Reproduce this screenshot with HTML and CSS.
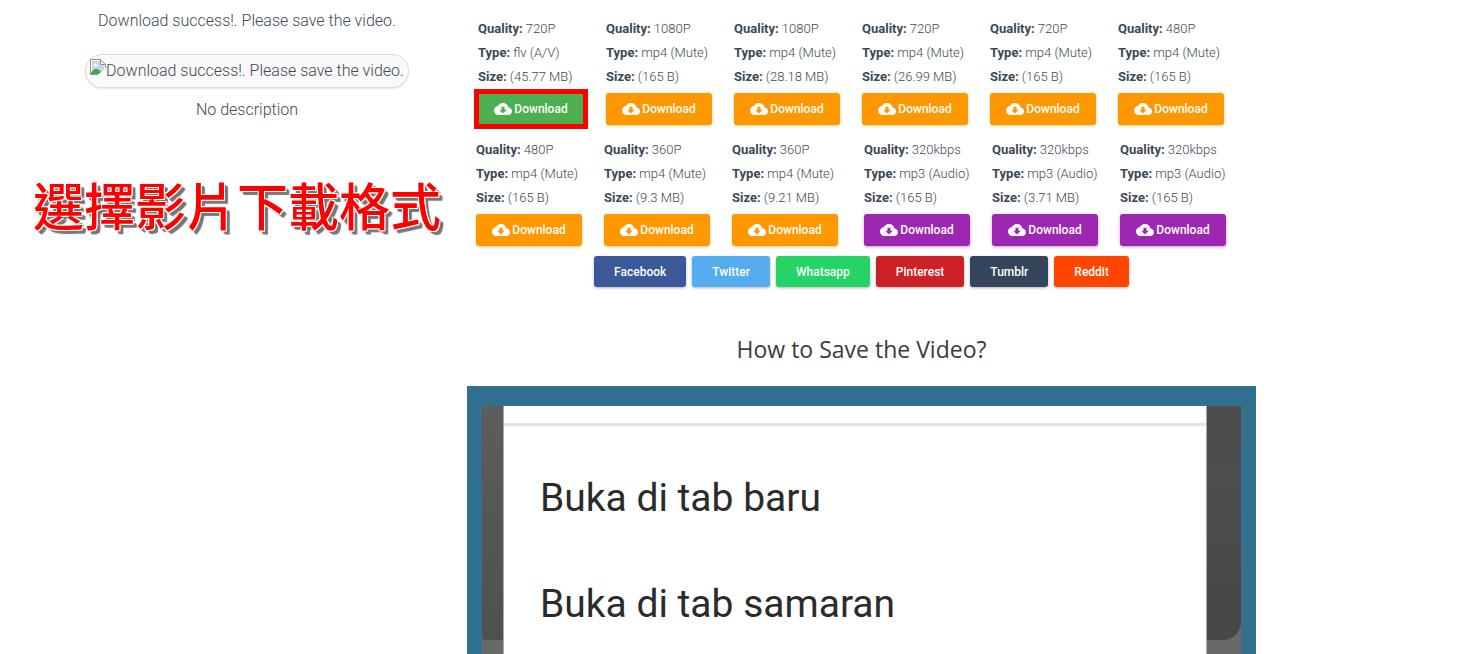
FILE: index.html
```html
<!DOCTYPE html>
<html lang="en">
<head>
  <meta charset="UTF-8" />
  <meta name="viewport" content="width=device-width, initial-scale=1.0"/>
  <title>Download Video</title>
  <link rel="stylesheet" href="styles.css">
</head>
<body>
  <svg class="sprite" aria-hidden="true">
    <symbol id="cloud" viewBox="0 0 24 24">
      <path d="M19.35 10.04C18.67 6.59 15.64 4 12 4 9.11 4 6.6 5.64 5.35 8.04 2.34 8.36 0 10.91 0 14c0 3.31 2.69 6 6 6h13c2.76 0 5-2.24 5-5 0-2.64-2.05-4.78-4.65-4.96zM17 13l-5 5-5-5h3V9h4v4h3z"></path>
    </symbol>
  </svg>

  <main class="page">
    <section class="info">
      <p>Download success!. Please save the video.</p>
      <div class="thumb">
        <svg class="thumb-icon" viewBox="0 0 16 16" aria-hidden="true">
          <path d="M.5.5h10l5 5v10H.5z" fill="#fff"></path>
          <path d="M2 2h8v4h4v8H2z" fill="#c3d6f5"></path>
          <path d="M4 6c0-2 3-2 3 0h1v1H3V6z" fill="#fff"></path>
          <path d="M1 15v-1c3-5 6-6 10-1l-2 2z" fill="#4ca23c"></path>
          <path d="M8 16l8-7v7z" fill="#fff"></path>
          <path d="M8 15.5H.5V.5h10l5 5V9M10.500 .5v5h5" fill="none" stroke="#8d9197"></path>
        </svg>
        <span>Download success!. Please save the video.</span>
      </div>
      <p>No description</p>
      <h1 lang="zh-Hant">選擇影片下載格式</h1>
    </section>

    <section class="content">
      <div class="formats formats-top">
        <div class="format">
          <div><b>Quality:</b> 720P</div>
          <div><b>Type:</b> flv (A/V)</div>
          <div><b>Size:</b> (45.77 MB)</div>
          <button class="btn green selected"><svg><use href="#cloud"/></svg>Download</button>
        </div>
        <div class="format">
          <div><b>Quality:</b> 1080P</div>
          <div><b>Type:</b> mp4 (Mute)</div>
          <div><b>Size:</b> (165 B)</div>
          <button class="btn orange"><svg><use href="#cloud"/></svg>Download</button>
        </div>
        <div class="format">
          <div><b>Quality:</b> 1080P</div>
          <div><b>Type:</b> mp4 (Mute)</div>
          <div><b>Size:</b> (28.18 MB)</div>
          <button class="btn orange"><svg><use href="#cloud"/></svg>Download</button>
        </div>
        <div class="format">
          <div><b>Quality:</b> 720P</div>
          <div><b>Type:</b> mp4 (Mute)</div>
          <div><b>Size:</b> (26.99 MB)</div>
          <button class="btn orange"><svg><use href="#cloud"/></svg>Download</button>
        </div>
        <div class="format">
          <div><b>Quality:</b> 720P</div>
          <div><b>Type:</b> mp4 (Mute)</div>
          <div><b>Size:</b> (165 B)</div>
          <button class="btn orange"><svg><use href="#cloud"/></svg>Download</button>
        </div>
        <div class="format">
          <div><b>Quality:</b> 480P</div>
          <div><b>Type:</b> mp4 (Mute)</div>
          <div><b>Size:</b> (165 B)</div>
          <button class="btn orange"><svg><use href="#cloud"/></svg>Download</button>
        </div>
      </div>

      <div class="formats">
        <div class="format">
          <div><b>Quality:</b> 480P</div>
          <div><b>Type:</b> mp4 (Mute)</div>
          <div><b>Size:</b> (165 B)</div>
          <button class="btn orange"><svg><use href="#cloud"/></svg>Download</button>
        </div>
        <div class="format">
          <div><b>Quality:</b> 360P</div>
          <div><b>Type:</b> mp4 (Mute)</div>
          <div><b>Size:</b> (9.3 MB)</div>
          <button class="btn orange"><svg><use href="#cloud"/></svg>Download</button>
        </div>
        <div class="format">
          <div><b>Quality:</b> 360P</div>
          <div><b>Type:</b> mp4 (Mute)</div>
          <div><b>Size:</b> (9.21 MB)</div>
          <button class="btn orange"><svg><use href="#cloud"/></svg>Download</button>
        </div>
        <div class="audio">
          <div class="format">
            <div><b>Quality:</b> 320kbps</div>
            <div><b>Type:</b> mp3 (Audio)</div>
            <div><b>Size:</b> (165 B)</div>
            <button class="btn purple"><svg><use href="#cloud"/></svg>Download</button>
          </div>
          <div class="format">
            <div><b>Quality:</b> 320kbps</div>
            <div><b>Type:</b> mp3 (Audio)</div>
            <div><b>Size:</b> (3.71 MB)</div>
            <button class="btn purple"><svg><use href="#cloud"/></svg>Download</button>
          </div>
          <div class="format">
            <div><b>Quality:</b> 320kbps</div>
            <div><b>Type:</b> mp3 (Audio)</div>
            <div><b>Size:</b> (165 B)</div>
            <button class="btn purple"><svg><use href="#cloud"/></svg>Download</button>
          </div>
        </div>
      </div>

      <div class="share">
        <a class="btn facebook" href="#">Facebook</a>
        <a class="btn twitter" href="#">Twitter</a>
        <a class="btn whatsapp" href="#">Whatsapp</a>
        <a class="btn pinterest" href="#">Pinterest</a>
        <a class="btn tumblr" href="#">Tumblr</a>
        <a class="btn reddit" href="#">Reddit</a>
      </div>

      <h2>How to Save the Video?</h2>

      <div class="guide">
        <div class="guide-side"></div>
        <div class="guide-menu">
          <p>Buka di tab baru</p>
          <p>Buka di tab samaran</p>
        </div>
        <div class="guide-side guide-right"></div>
      </div>
    </section>
  </main>
</body>
</html>
```

FILE: styles.css
```css
* {
  box-sizing: border-box;
}

body {
  margin: 0;
  font-family: Roboto, sans-serif;
  font-weight: 300;
  color: #3c4858;
  background: #fff;
}

p, h1, h2 {
  margin: 0;
}

.sprite {
  display: none;
}

.page {
  display: grid;
  grid-template-columns: 467fr 789fr 210fr;
  min-height: 100vh;
}

/* left column */
.info {
  display: flex;
  flex-direction: column;
  align-items: center;
  padding: 9px 0 0 27px;
  font-size: 16px;
  line-height: 24px;
}

.thumb {
  display: flex;
  align-items: flex-start;
  margin: 21px 0 10px;
  padding: 4px;
  border: 1px solid #ddd;
  border-radius: 17px;
  background: #fafafa;
  box-shadow: 0 1px 2px rgba(0,0,0,0.1);
}

.thumb-icon {
  width: 16px;
  height: 16px;
}

h1 {
  margin-top: 46px;
  padding-right: 20px;
  font-family: "Noto Sans CJK TC", sans-serif;
  font-size: 51px;
  font-weight: 500;
  line-height: 72px;
  white-space: nowrap;
  color: #f00;
  text-shadow: -1px -1px 0 #fff, 1px -1px 0 #fff, -1px 1px 0 #fff, 1px 1px 0 #fff, 3px 3px 1px #777, 4px 4px 1px #777;
}

/* right column */
.content {
  display: flex;
  flex-direction: column;
  padding-top: 17px;
}

.formats {
  display: flex;
  gap: 22px;
  padding-left: 9px;
  margin-bottom: 10px;
}

.formats-top {
  padding-left: 11px;
  margin-bottom: 13px;
}

.audio {
  display: flex;
  gap: 22px;
  margin-left: 4px;
}

.format {
  width: 106px;
  font-size: 13px;
  line-height: 24px;
  white-space: nowrap;
}

.format b {
  font-weight: 700;
}

.btn {
  display: flex;
  align-items: center;
  justify-content: center;
  border: none;
  border-radius: 3px;
  font-family: inherit;
  font-size: 12px;
  font-weight: 500;
  color: #fff;
  text-decoration: none;
  cursor: pointer;
}

.format .btn {
  width: 100%;
  height: 32px;
  margin-top: 4px;
  padding: 0;
  gap: 2px;
}

.btn svg {
  width: 18px;
  height: 18px;
  fill: currentColor;
}

.green { background: #4caf50; }
.orange { background: #ff9800; box-shadow: 0 1px 3px rgba(255,152,0,0.5); }
.purple { background: #9c27b0; box-shadow: 0 1px 3px rgba(156,39,176,0.5); }

.format .selected {
  border-radius: 0;
  outline: 5px solid #f00;
  outline-offset: -1px;
}

.share {
  display: flex;
  justify-content: center;
  gap: 6px;
}

.share .btn {
  height: 31px;
  padding: 0 20px;
  box-shadow: 0 1px 3px rgba(0,0,0,0.3);
}

.facebook { background: #3b5998; }
.twitter { background: #55acee; }
.whatsapp { background: #25d366; }
.pinterest { background: #cc2127; }
.tumblr { background: #35465c; }
.reddit { background: #ff4500; }

h2 {
  margin: 44px 0 19px;
  font-family: "Open Sans", "Noto Sans", sans-serif;
  font-size: 23px;
  font-weight: 400;
  line-height: 36px;
  text-align: center;
  color: #3c3c3c;
}

.guide {
  display: flex;
  flex: 1;
  padding: 20px 15px 0;
  background: #31708f;
}

.guide-side {
  display: flex;
  flex: 0 0 22px;
  align-items: stretch;
  padding-bottom: 14px;
  background: #696969;
  border-right: 1px solid #aaa;
}

.guide-side::before {
  content: "";
  flex: 1;
  background: linear-gradient(#5e5c5c, #505050);
  border-bottom-left-radius: 4px;
}

.guide-right {
  flex-basis: 35px;
  border-right: none;
  border-left: 1px solid #aaa;
}

.guide-right::before {
  background: linear-gradient(#4d4a4a, #4c4e50 30%, #484646);
  border-radius: 0 0 18px 0;
}

.guide-menu {
  flex: 1;
  padding-left: 36px;
  background: #fff;
  font-size: 39px;
  font-weight: 400;
  line-height: 48px;
  color: #2a2b2d;
}

.guide-menu::before {
  content: "";
  display: block;
  height: 3px;
  margin: 17px 0 48px -36px;
  background: #e4e4e4;
}

.guide-menu p + p {
  margin-top: 58px;
}
```
